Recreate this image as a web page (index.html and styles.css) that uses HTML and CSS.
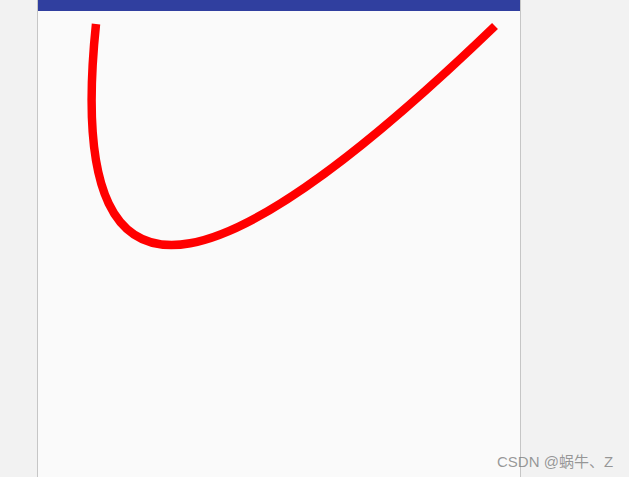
FILE: index.html
```html
<!DOCTYPE html>
<html>
<head>
<meta charset="utf-8">
<link rel="stylesheet" href="styles.css">
</head>
<body>
<div class="screen">
  <div class="panel">
    <div class="appbar"></div>
    <svg class="canvas" viewBox="38 11 482 466" width="482" height="466">
      <path d="M96 24 C60 370 250 262 495 26" fill="none" stroke="#ff0000" stroke-width="8.5"/>
    </svg>
  </div>
  <div class="watermark">CSDN @蜗牛、Z</div>
</div>
</body>
</html>
```
FILE: styles.css
```css
html, body {
  margin: 0;
  padding: 0;
}
body {
  background: #f2f2f2;
  width: 629px;
  height: 477px;
  overflow: hidden;
  font-family: "Liberation Sans", "Noto Sans CJK SC", sans-serif;
}
.screen {
  position: relative;
  width: 629px;
  height: 477px;
  padding-left: 37px;
  box-sizing: border-box;
}
.panel {
  width: 482px;
  height: 477px;
  background: #fafafa;
  border-left: 1px solid #c6c6c6;
  border-right: 1px solid #c6c6c6;
  display: flex;
  flex-direction: column;
}
.appbar {
  height: 11px;
  background: #303f9f;
  flex: none;
}
.canvas {
  display: block;
  flex: none;
}
.watermark {
  position: absolute;
  left: 497px;
  top: 450px;
  font-size: 15px;
  color: rgba(120, 120, 120, 0.75);
  white-space: nowrap;
}
```
